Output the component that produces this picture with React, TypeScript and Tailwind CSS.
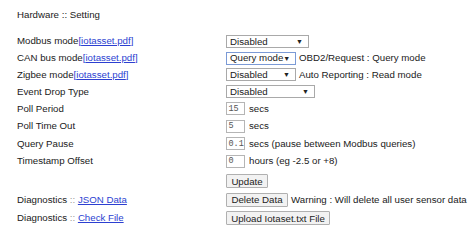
import React from "react";

// Fake native select: text + small down arrow
const Select = ({ value, width, focused }: { value: string; width: string; focused?: boolean }) => (
  <div
    className={`flex h-[13px] items-center justify-between whitespace-nowrap bg-white pl-[3px] pr-[5px] ${width} border ${
      focused ? "border-[#7b9ad6]" : "border-[#a9a9a9]"
    }`}
  >
    <span className="leading-none">{value}</span>
    <span className="text-[7px] leading-none text-[#222]">▼</span>
  </div>
);

const Input = ({ value }: { value: string }) => (
  <div className="flex h-[13px] w-[19px] items-center overflow-hidden border border-[#b5b5b5] bg-white pl-[1.5px] font-['Liberation_Mono',monospace] text-[8.5px] leading-none text-[#555]">
    {value}
  </div>
);

const Button = ({ label, width }: { label: string; width: string }) => (
  <button
    className={`flex h-[14px] items-center justify-center whitespace-nowrap rounded-[1px] border border-[#b0b0b0] bg-[#f2f2f2] leading-none text-[#222] ${width}`}
  >
    {label}
  </button>
);

const PdfLink = () => (
  <span className="text-[#2c3fd1]">
    [<span className="underline">iotasset.pdf</span>]
  </span>
);

const Row = ({ h, label, children }: { h: string; label: React.ReactNode; children?: React.ReactNode }) => (
  <div className={`flex items-center whitespace-nowrap ${h}`}>
    <div className="w-[209px] shrink-0">{label}</div>
    <div className="flex items-center">{children}</div>
  </div>
);

export default function App() {
  return (
    <div className="h-[243px] w-[474px] bg-white pl-[17px] pt-[9px] font-['Liberation_Sans',Arial,sans-serif] text-[9.7px] leading-[12px] text-[#1a1a1a]">
      <div>Hardware :: Setting</div>

      <div className="mt-[12px] flex flex-col">
        <Row h="h-[16.8px]" label={<>Modbus mode<PdfLink /></>}>
          <Select value="Disabled" width="w-[83px]" />
        </Row>
        <Row h="h-[16.8px]" label={<>CAN bus mode<PdfLink /></>}>
          <Select value="Query mode" width="w-[70px]" focused />
          <span className="ml-[3px]">OBD2/Request : Query mode</span>
        </Row>
        <Row h="h-[16.8px]" label={<>Zigbee mode<PdfLink /></>}>
          <Select value="Disabled" width="w-[70px]" />
          <span className="ml-[3px]">Auto Reporting : Read mode</span>
        </Row>
        <Row h="h-[16.8px]" label="Event Drop Type">
          <Select value="Disabled" width="w-[89px]" />
        </Row>

        <Row h="h-[17.5px]" label="Poll Period">
          <Input value="15" />
          <span className="ml-[4px]">secs</span>
        </Row>
        <Row h="h-[17.5px]" label="Poll Time Out">
          <Input value="5" />
          <span className="ml-[4px]">secs</span>
        </Row>
        <Row h="h-[17.5px]" label="Query Pause">
          <Input value="0.1" />
          <span className="ml-[4px]">secs (pause between Modbus queries)</span>
        </Row>
        <Row h="h-[17.5px]" label="Timestamp Offset">
          <Input value="0" />
          <span className="ml-[4px]">hours (eg -2.5 or +8)</span>
        </Row>

        <div className="mt-[2px] flex flex-col">
          <Row h="h-[18.5px]" label="">
            <Button label="Update" width="w-[42px]" />
          </Row>
          <Row
            h="h-[18.5px]"
            label={
              <>
                Diagnostics <span className="text-[#999]">::</span>{" "}
                <span className="text-[#2c3fd1] underline">JSON Data</span>
              </>
            }
          >
            <Button label="Delete Data" width="w-[62px]" />
            <span className="ml-[3px]">Warning : Will delete all user sensor data</span>
          </Row>
          <Row
            h="h-[18.5px]"
            label={
              <>
                Diagnostics <span className="text-[#999]">::</span>{" "}
                <span className="text-[#2c3fd1] underline">Check File</span>
              </>
            }
          >
            <Button label="Upload Iotaset.txt File" width="w-[104px]" />
          </Row>
        </div>
      </div>
    </div>
  );
}
